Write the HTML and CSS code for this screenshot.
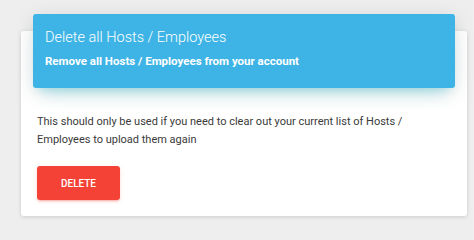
FILE: index.html
```html
<!DOCTYPE html>
<html>
<head>
<meta charset="utf-8">
<link rel="stylesheet" href="styles.css">
</head>
<body>
<div class="page">
  <div class="card">
    <div class="card-header">
      <h4 class="title">Delete all Hosts / Employees</h4>
      <p class="category">Remove all Hosts / Employees from your account</p>
    </div>
    <div class="card-content">
      <p class="text">This should only be used if you need to clear out your current list of Hosts / Employees to upload them again</p>
      <button class="btn-danger">DELETE</button>
    </div>
  </div>
</div>
</body>
</html>
```

FILE: styles.css
```css
html, body {
  margin: 0;
  padding: 0;
  background: #eeeeee;
  font-family: Roboto, "Liberation Sans", sans-serif;
}
.page {
  width: 474px;
  height: 230px;
  padding: 31px 7px 0 21px;
  box-sizing: border-box;
}
.card {
  background: #ffffff;
  width: 446px;
  height: 185px;
  border-radius: 3px;
  box-shadow: 0 1px 4px rgba(0,0,0,0.14);
  display: flex;
  flex-direction: column;
}
.card-header {
  margin: -17px 12px 0 12px;
  height: 74px;
  box-sizing: border-box;
  background: #3db4e5;
  border-radius: 3px;
  padding: 15px 12px 0 12px;
  color: #ffffff;
  box-shadow: 0 12px 20px -10px rgba(0,188,212,0.28), 0 4px 20px 0 rgba(0,0,0,0.12), 0 7px 8px -5px rgba(0,188,212,0.2);
}
.title {
  margin: 0;
  font-weight: 300;
  font-size: 14.5px;
  line-height: 18px;
}
.category {
  margin: 6px 0 0 0;
  font-weight: 700;
  font-size: 11.5px;
  line-height: 16px;
}
.card-content {
  padding: 25px 16px 0 16px;
}
.text {
  margin: 0;
  font-size: 11px;
  line-height: 18px;
  color: #3a3a3a;
  font-weight: 400;
}
.btn-danger {
  margin-top: 17px;
  width: 83px;
  height: 34px;
  border: none;
  border-radius: 3px;
  background: #f44336;
  color: #ffffff;
  font-family: Roboto, "Liberation Sans", sans-serif;
  font-size: 10px;
  font-weight: 500;
  box-shadow: 0 2px 2px 0 rgba(244,67,54,0.14), 0 3px 1px -2px rgba(244,67,54,0.2), 0 1px 5px 0 rgba(244,67,54,0.12);
  padding: 0;
}
```
